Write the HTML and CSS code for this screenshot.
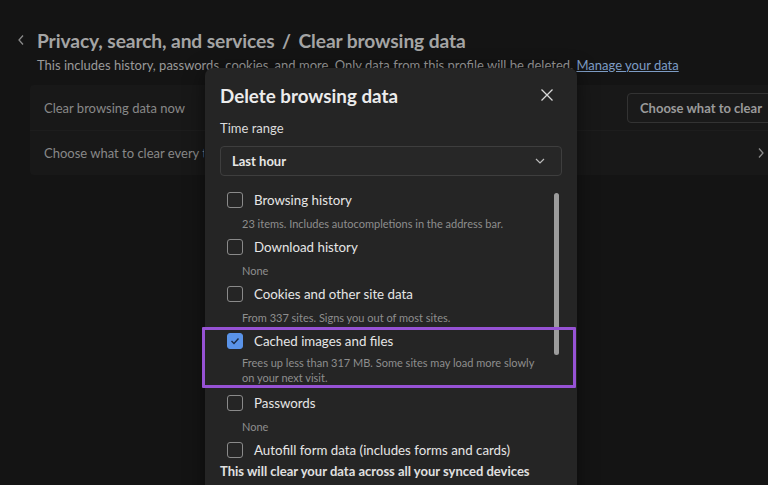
FILE: index.html
```html
<!DOCTYPE html>
<html lang="en">

<head>
  <meta charset="UTF-8">
  <meta name="viewport" content="width=device-width, initial-scale=1.0">
  <title>Clear browsing data</title>
  <link rel="stylesheet" href="styles.css">
</head>

<body>

  <div class="settings-page">
    <div class="page-header">
      <span class="back-arrow">
        <svg width="8" height="12" viewBox="0 0 8 12"><path d="M6 1.5 L2 6 L6 10.5" fill="none" stroke="#8a8a8a" stroke-width="1.3"/></svg>
      </span>
      <h1>Privacy, search, and services <span class="sep">/</span> Clear browsing data</h1>
    </div>
    <p class="page-sub">This includes history, passwords, cookies, and more. Only data from this profile will be deleted. <a href="#">Manage your data</a></p>

    <div class="settings-card">
      <div class="card-row">
        <span>Clear browsing data now</span>
        <button class="outline-btn">Choose what to clear</button>
      </div>
      <div class="card-row">
        <span class="row-text">Choose what to clear every time you close the browser</span>
        <svg width="8" height="12" viewBox="0 0 8 12"><path d="M2 1.5 L6 6 L2 10.5" fill="none" stroke="#8a8a8a" stroke-width="1.3"/></svg>
      </div>
    </div>
  </div>

  <!-- modal dialog -->
  <div class="dialog">
    <div class="dialog-header">
      <h2>Delete browsing data</h2>
      <svg width="14" height="14" viewBox="0 0 14 14"><path d="M1.5 1.5 L12.5 12.5 M12.5 1.5 L1.5 12.5" stroke="#d8d8d8" stroke-width="1.3"/></svg>
    </div>
    <div class="field-label">Time range</div>
    <div class="select-box">
      <span>Last hour</span>
      <svg width="10" height="6" viewBox="0 0 10 6"><path d="M1 1 L5 5 L9 1" fill="none" stroke="#bbb" stroke-width="1.2"/></svg>
    </div>

    <div class="data-list">
      <div class="items">
        <div class="item">
          <div class="item-top"><span class="check"></span>Browsing history</div>
          <div class="item-desc">23 items. Includes autocompletions in the address bar.</div>
        </div>
        <div class="item">
          <div class="item-top"><span class="check"></span>Download history</div>
          <div class="item-desc">None</div>
        </div>
        <div class="item">
          <div class="item-top"><span class="check"></span>Cookies and other site data</div>
          <div class="item-desc">From 337 sites. Signs you out of most sites.</div>
        </div>
        <div class="item">
          <div class="item-top">
            <span class="check checked">
              <svg width="10" height="8" viewBox="0 0 10 8"><path d="M1.5 4 L4 6.5 L8.5 1.5" fill="none" stroke="#1b2a44" stroke-width="1.4"/></svg>
            </span>Cached images and files</div>
          <div class="item-desc two-line">Frees up less than 317 MB. Some sites may load more slowly on your next visit.</div>
        </div>
        <div class="item">
          <div class="item-top"><span class="check"></span>Passwords</div>
          <div class="item-desc">None</div>
        </div>
        <div class="item">
          <div class="item-top"><span class="check"></span>Autofill form data (includes forms and cards)</div>
        </div>
      </div>
      <div class="scroll-track">
        <div class="scroll-thumb"></div>
      </div>
    </div>

    <div class="sync-note">This will clear your data across all your synced devices</div>

    <div class="highlight"></div>
  </div>

</body>

</html>
```

FILE: styles.css
```css
body {
  font-family: Lato, "Noto Sans", sans-serif;
  margin: 0;
  padding: 0;
  width: 768px;
  height: 485px;
  overflow: hidden;
  background-color: #141414;
  position: relative;
}

.settings-page {
  padding: 26px 0 0 0;
}

.page-header {
  display: flex;
  align-items: center;
  height: 28px;
  padding-left: 17px;
}

.back-arrow {
  display: flex;
  width: 20px;
}

.page-header h1 {
  margin: 0;
  font-size: 19.2px;
  font-weight: 700;
  color: #a4a4a4;
  letter-spacing: -0.1px;
}

.page-header .sep {
  margin: 0 3px;
}

.page-sub {
  margin: 2px 0 0 0;
  padding-left: 37px;
  font-size: 13px;
  line-height: 18px;
  color: #9a9a9a;
}

.page-sub a {
  color: #7d9cc4;
}

.settings-card {
  margin: 11px 0 0 30px;
  background-color: #181818;
  border-radius: 4px 0 0 4px;
}

.card-row {
  display: flex;
  align-items: center;
  justify-content: space-between;
  height: 45px;
  padding: 0 0 0 14px;
  font-size: 13px;
  color: #888;
  white-space: nowrap;
  overflow: hidden;
}

.card-row + .card-row {
  height: 44px;
  border-top: 1px solid #1d1d1d;
  padding-right: 3px;
}

/* the rest of this label sits under the dialog */
.row-text {
  width: 160px;
  overflow: hidden;
}

.outline-btn {
  width: 150px;
  text-align: left;
  font-family: inherit;
  font-size: 13px;
  font-weight: 700;
  color: #9a9a9a;
  background: #1a1a1a;
  border: 1px solid #333;
  border-radius: 4px;
  height: 30px;
  padding: 0 0 0 12px;
  margin-right: -9px;
}

/* dialog */
.dialog {
  position: absolute;
  left: 205px;
  top: 68px;
  width: 372px;
  height: 440px;
  box-sizing: border-box;
  padding: 14px 15px 0 15px;
  background-color: #252525;
  border-radius: 8px;
  box-shadow: 0 4px 20px rgba(0, 0, 0, 0.5);
}

.dialog-header {
  display: flex;
  align-items: center;
  justify-content: space-between;
  height: 26px;
  padding-right: 8px;
}

.dialog-header h2 {
  margin: 0;
  font-size: 18.8px;
  font-weight: 700;
  color: #ececec;
}

.field-label {
  margin-top: 11px;
  font-size: 13px;
  line-height: 18px;
  color: #dcdcdc;
}

.select-box {
  display: flex;
  align-items: center;
  justify-content: space-between;
  margin-top: 9px;
  height: 30px;
  box-sizing: border-box;
  padding: 0 16px 0 11px;
  border: 1px solid #3e3e3e;
  border-radius: 4px;
  background-color: #272727;
  font-size: 13px;
  font-weight: 700;
  color: #e6e6e6;
}

.data-list {
  display: flex;
  margin-top: 14px;
  height: 270px;
  overflow: hidden;
}

.items {
  flex: 1;
}

.item {
  margin-bottom: 6px;
}

.item-top {
  display: flex;
  align-items: center;
  height: 20px;
  padding-left: 7px;
  font-size: 13.3px;
  color: #e6e6e6;
}

.check {
  display: flex;
  align-items: center;
  justify-content: center;
  width: 16px;
  height: 16px;
  box-sizing: border-box;
  margin-right: 11px;
  border: 1px solid #8a8a8a;
  border-radius: 3px;
}

.check.checked {
  background-color: #5a93e8;
  border-color: #5a93e8;
}

.item-desc {
  margin-top: 6px;
  padding-left: 22px;
  padding-right: 8px;
  font-size: 11px;
  line-height: 15px;
  color: #8e8e8e;
}

.item-desc.two-line {
  margin-top: 4px;
  padding-bottom: 2px;
}

.scroll-track {
  width: 8px;
  padding-top: 3px;
}

.scroll-thumb {
  width: 5px;
  height: 162px;
  border-radius: 3px;
  background-color: #9c9c9c;
}

.sync-note {
  margin-top: 2px;
  font-size: 13px;
  font-weight: 700;
  line-height: 18px;
  color: #e0e0e0;
}

/* annotation drawn over the dialog */
.highlight {
  position: absolute;
  left: -3px;
  top: 259px;
  width: 374px;
  height: 61px;
  box-sizing: border-box;
  border: 3px solid #9652d4;
  border-radius: 1px;
}
```
